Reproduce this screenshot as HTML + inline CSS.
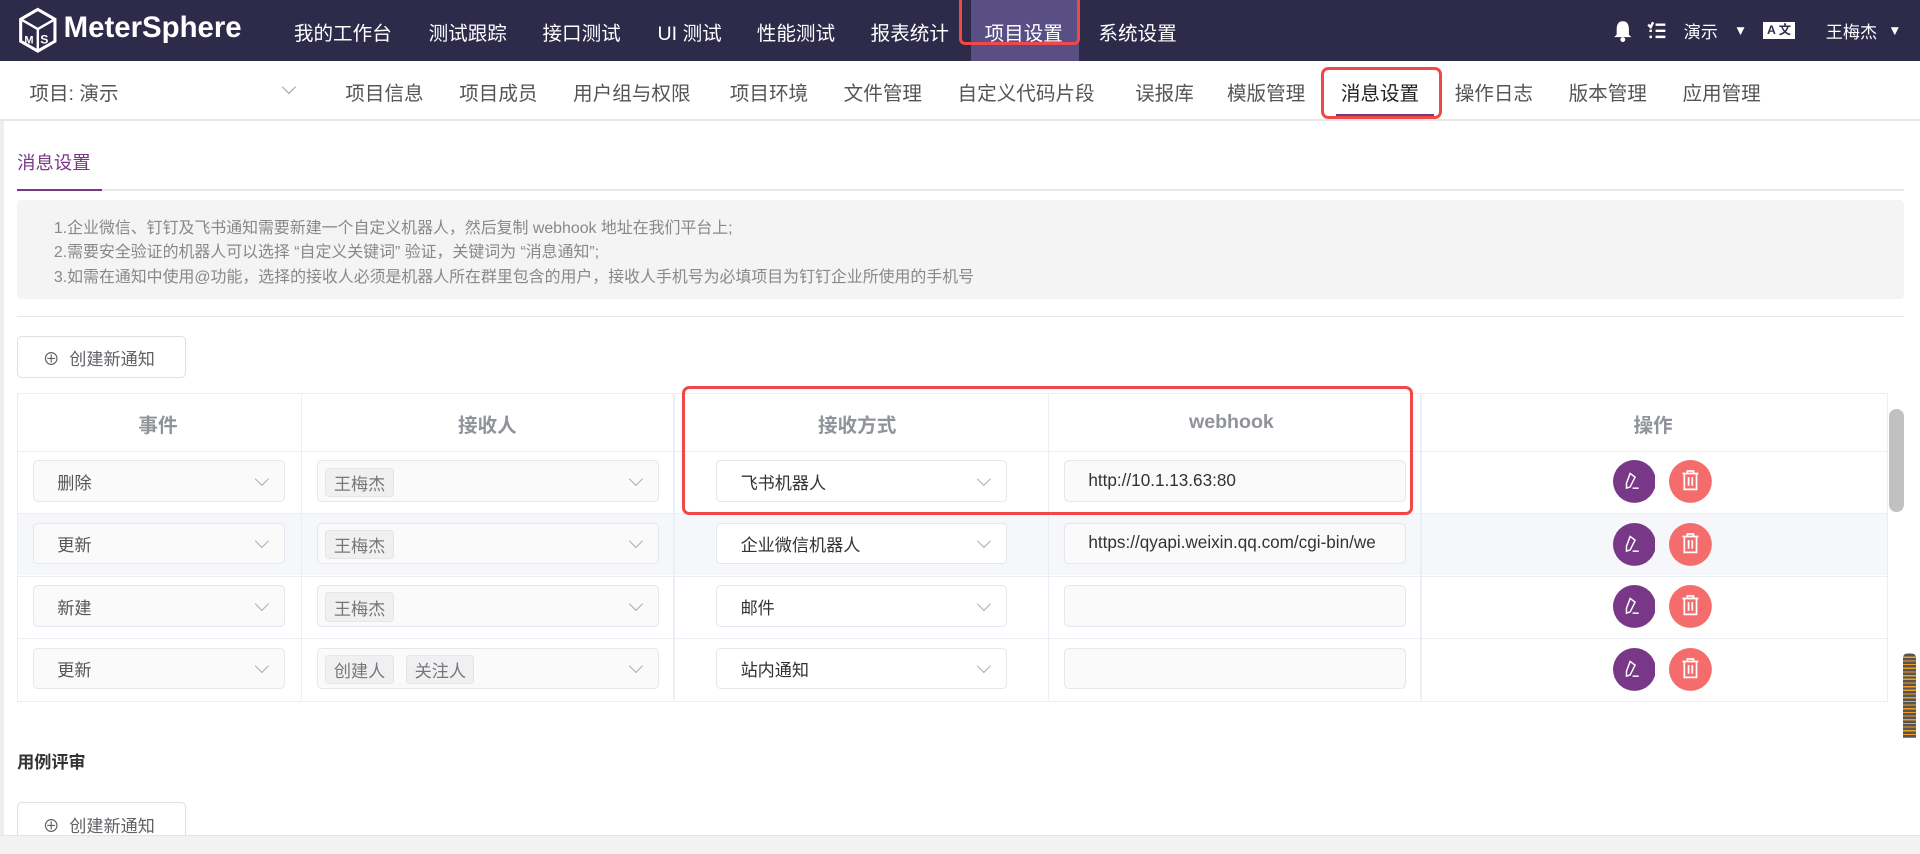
<!DOCTYPE html>
<html><head><meta charset="utf-8"><style>
*{box-sizing:border-box;margin:0;padding:0}
html,body{width:1920px;height:854px;overflow:hidden;background:#fff}
#r{zoom:1.22449;width:1568px;height:698px;position:relative;font-family:"Liberation Sans","Noto Sans CJK SC",sans-serif;color:#606266;overflow:hidden}
.a{position:absolute;white-space:nowrap}
.top{left:0;top:0;width:1568px;height:50px;background:#2d2a4a}
.sub .t{font-size:16px;top:63px;color:#555}
.sel{position:absolute;height:34px;border:1px solid #e4e7ed;border-radius:4px;background:#fafafa;font-size:14px;color:#555}
.sel span{position:absolute;left:19px;top:6px}
.chev{position:absolute;right:14px;top:10px;width:8px;height:8px;border-right:1px solid #aaa;border-bottom:1px solid #aaa;transform:rotate(45deg)}
.tag{position:absolute;top:5px;height:24px;background:#f0f0f2;border:1px solid #e5e5e5;border-radius:3px;font-size:14px;color:#777;padding:1px 6px}
</style></head><body><div id="r">
<div class="a top"></div>
<svg class="a" style="left:14px;top:6px" width="34" height="38" viewBox="0 0 34 38"><path d="M17 2 L31 10 L31 28 L17 36 L3 28 L3 10Z" fill="none" stroke="#fff" stroke-width="2.5"/><path d="M3 10 L17 18 L31 10 M17 18 L17 36" stroke="#fff" stroke-width="2" fill="none"/><text x="6" y="30" font-size="9" fill="#fff" font-weight="bold" font-family="Liberation Sans">M</text><text x="19" y="30" font-size="10" fill="#fff" font-weight="bold" font-family="Liberation Sans">S</text></svg>
<div class="a" style="left:52px;top:9px;color:#fff;font-size:24px;font-weight:bold">MeterSphere</div>
<div class="a" style="left:793px;top:0;width:88px;height:50px;background:#5a4f85"></div>
<div class="a" style="left:240px;color:#fff;font-size:16px;top:14px">我的工作台</div>
<div class="a" style="left:350px;color:#fff;font-size:16px;top:14px">测试跟踪</div>
<div class="a" style="left:443px;color:#fff;font-size:16px;top:14px">接口测试</div>
<div class="a" style="left:537px;color:#fff;font-size:16px;top:14px">UI 测试</div>
<div class="a" style="left:618px;color:#fff;font-size:16px;top:14px">性能测试</div>
<div class="a" style="left:711px;color:#fff;font-size:16px;top:14px">报表统计</div>
<div class="a" style="left:804px;color:#fff;font-size:16px;top:14px">项目设置</div>
<div class="a" style="left:897px;color:#fff;font-size:16px;top:14px">系统设置</div>
<div class="a" style="left:783px;top:-4px;width:99px;height:41px;border:3px solid #f04848;border-radius:5px"></div>
<svg class="a" style="left:1317px;top:16px" width="16" height="18" viewBox="0 0 16 18"><path d="M8 1 C4 1 3 4 3 8 L3 12 L1 14 L15 14 L13 12 L13 8 C13 4 12 1 8 1Z" fill="#fff"/><circle cx="8" cy="16" r="2" fill="#fff"/></svg>
<svg class="a" style="left:1345px;top:17px" width="16" height="16" viewBox="0 0 16 16"><path d="M1 3 L3 5 L5 1 M7 3 H15 M7 8 H15 M7 13 H15 M2 8 H4 M2 13 H4" stroke="#fff" stroke-width="2" fill="none"/></svg>
<div class="a" style="left:1375px;top:15px;color:#fff;font-size:14px">演示</div>
<div class="a" style="left:1416px;top:19px;color:#fff;font-size:11px">▼</div>
<div class="a" style="left:1440px;top:18px;width:26px;height:14px;background:#fff;color:#2d2a4a;font-size:10px;font-weight:bold;padding-left:3px;line-height:14px">A 文</div>
<div class="a" style="left:1491px;top:15px;color:#fff;font-size:14px">王梅杰</div>
<div class="a" style="left:1542px;top:19px;color:#fff;font-size:11px">▼</div>

<div class="a" style="left:0;top:97px;width:1568px;height:2px;background:#e6e6e6"></div>
<div class="a" style="left:24px;top:63px;font-size:16px;color:#555">项目: 演示</div>
<div class="a" style="left:232px;top:67px;width:8px;height:8px;border-right:1px solid #999;border-bottom:1px solid #999;transform:rotate(45deg)"></div>
<div class="sub">
<div class="a t" style="left:282px">项目信息</div><div class="a t" style="left:375px">项目成员</div><div class="a t" style="left:468px">用户组与权限</div><div class="a t" style="left:596px">项目环境</div><div class="a t" style="left:689px">文件管理</div><div class="a t" style="left:782px">自定义代码片段</div><div class="a t" style="left:927px">误报库</div><div class="a t" style="left:1002px">模版管理</div><div class="a t" style="left:1095px;color:#222">消息设置</div><div class="a t" style="left:1188px">操作日志</div><div class="a t" style="left:1281px">版本管理</div><div class="a t" style="left:1374px">应用管理</div>
</div>
<div class="a" style="left:1091px;top:93px;width:80px;height:4px;background:#783887"></div>
<div class="a" style="left:1079px;top:55px;width:99px;height:42px;border:3px solid #f04848;border-radius:6px"></div>

<div class="a" style="left:0;top:99px;width:3px;height:600px;background:#eee"></div>
<div class="a" style="left:14px;top:122px;font-size:15px;color:#783887">消息设置</div>
<div class="a" style="left:14px;top:154px;width:1541px;height:2px;background:#e4e7ed"></div>
<div class="a" style="left:14px;top:154px;width:69px;height:2px;background:#783887"></div>
<div class="a" style="left:14px;top:163px;width:1541px;height:81px;background:#f4f4f5;border-radius:3px"></div>
<div class="a" style="left:44px;top:177px;font-size:13px;color:#888;line-height:20px">1.企业微信、钉钉及飞书通知需要新建一个自定义机器人，然后复制 webhook 地址在我们平台上;<br>2.需要安全验证的机器人可以选择 “自定义关键词” 验证，关键词为 “消息通知”;<br>3.如需在通知中使用@功能，选择的接收人必须是机器人所在群里包含的用户，接收人手机号为必填项目为钉钉企业所使用的手机号</div>
<div class="a" style="left:14px;top:258px;width:1541px;height:1px;background:#e4e7ed"></div>
<div class="a" style="left:14px;top:274px;width:138px;height:35px;border:1px solid #dcdfe6;border-radius:4px;font-size:14px;color:#606266;padding:7px 0 0 20px">⊕&nbsp;&nbsp;创建新通知</div>

<div class="a" style="left:14px;top:321px;width:1528px;height:252px;border:1px solid #ebeef5"></div>
<div class="a" style="left:15px;top:419px;width:1526px;height:51px;background:#f5f7fa"></div>
<div class="a" style="left:15px;top:368px;width:1526px;height:1px;background:#ebeef5"></div>
<div class="a" style="left:15px;top:419px;width:1526px;height:1px;background:#ebeef5"></div>
<div class="a" style="left:15px;top:470px;width:1526px;height:1px;background:#ebeef5"></div>
<div class="a" style="left:15px;top:521px;width:1526px;height:1px;background:#ebeef5"></div>
<div class="a" style="left:246px;top:322px;width:1px;height:250px;background:#ebeef5"></div>
<div class="a" style="left:550px;top:322px;width:1px;height:250px;background:#ebeef5"></div>
<div class="a" style="left:856px;top:322px;width:1px;height:250px;background:#ebeef5"></div>
<div class="a" style="left:1160px;top:322px;width:1px;height:250px;background:#ebeef5"></div>
<div class="a" style="left:113px;top:334px;font-size:16px;font-weight:bold;color:#909399">事件</div>
<div class="a" style="left:374px;top:334px;font-size:16px;font-weight:bold;color:#909399">接收人</div>
<div class="a" style="left:668px;top:334px;font-size:16px;font-weight:bold;color:#909399">接收方式</div>
<div class="a" style="left:971px;top:336px;font-size:16px;font-weight:bold;color:#909399">webhook</div>
<div class="a" style="left:1334px;top:334px;font-size:16px;font-weight:bold;color:#909399">操作</div>

<div class="sel" style="left:27px;top:376px;width:206px"><span>删除</span><i class="chev"></i></div>
<div class="sel" style="left:27px;top:427px;width:206px"><span>更新</span><i class="chev"></i></div>
<div class="sel" style="left:27px;top:478px;width:206px"><span>新建</span><i class="chev"></i></div>
<div class="sel" style="left:27px;top:529px;width:206px"><span>更新</span><i class="chev"></i></div>
<div class="sel" style="left:259px;top:376px;width:279px"><div class="tag" style="left:6px">王梅杰</div><i class="chev"></i></div>
<div class="sel" style="left:259px;top:427px;width:279px"><div class="tag" style="left:6px">王梅杰</div><i class="chev"></i></div>
<div class="sel" style="left:259px;top:478px;width:279px"><div class="tag" style="left:6px">王梅杰</div><i class="chev"></i></div>
<div class="sel" style="left:259px;top:529px;width:279px"><div class="tag" style="left:6px">创建人</div><div class="tag" style="left:72px">关注人</div><i class="chev"></i></div>
<div class="sel" style="left:585px;top:376px;width:237px;background:#fff"><span style="color:#333">飞书机器人</span><i class="chev"></i></div>
<div class="sel" style="left:585px;top:427px;width:237px;background:#fff"><span style="color:#333">企业微信机器人</span><i class="chev"></i></div>
<div class="sel" style="left:585px;top:478px;width:237px;background:#fff"><span style="color:#333">邮件</span><i class="chev"></i></div>
<div class="sel" style="left:585px;top:529px;width:237px;background:#fff"><span style="color:#333">站内通知</span><i class="chev"></i></div>
<div class="sel" style="left:869px;top:376px;width:279px;overflow:hidden"><span style="color:#333;top:7px">http://10.1.13.63:80</span></div>
<div class="sel" style="left:869px;top:427px;width:279px;overflow:hidden"><span style="color:#333;top:7px">https://qyapi.weixin.qq.com/cgi-bin/we</span></div>
<div class="sel" style="left:869px;top:478px;width:279px"></div>
<div class="sel" style="left:869px;top:529px;width:279px"></div>
<div class="a" style="left:557px;top:315px;width:597px;height:106px;border:3px solid #f04848;border-radius:6px"></div>

<svg width="0" height="0" style="position:absolute"><defs>
<g id="pe"><path d="M10 9 L14 12 L10 20 L7 21 L7 17Z" fill="none" stroke="#fff" stroke-width="1.2"/><path d="M12 21 H17" stroke="#fff" stroke-width="1.2"/></g>
<g id="tr"><path d="M11 11 H24 M15 11 V9 H20 V11 M12.5 11 V24 H22.5 V11 M16 14 V21 M19 14 V21" fill="none" stroke="#fff" stroke-width="1.4"/></g>
</defs></svg>
<svg class="a" style="left:1317px;top:376px" width="35" height="35"><circle cx="17.5" cy="17.5" r="17.5" fill="#783887"/><use href="#pe" transform="translate(4,2)"/></svg>
<svg class="a" style="left:1363px;top:376px" width="35" height="35"><circle cx="17.5" cy="17.5" r="17.5" fill="#f56c6c"/><use href="#tr"/></svg>
<svg class="a" style="left:1317px;top:427px" width="35" height="35"><circle cx="17.5" cy="17.5" r="17.5" fill="#783887"/><use href="#pe" transform="translate(4,2)"/></svg>
<svg class="a" style="left:1363px;top:427px" width="35" height="35"><circle cx="17.5" cy="17.5" r="17.5" fill="#f56c6c"/><use href="#tr"/></svg>
<svg class="a" style="left:1317px;top:478px" width="35" height="35"><circle cx="17.5" cy="17.5" r="17.5" fill="#783887"/><use href="#pe" transform="translate(4,2)"/></svg>
<svg class="a" style="left:1363px;top:478px" width="35" height="35"><circle cx="17.5" cy="17.5" r="17.5" fill="#f56c6c"/><use href="#tr"/></svg>
<svg class="a" style="left:1317px;top:529px" width="35" height="35"><circle cx="17.5" cy="17.5" r="17.5" fill="#783887"/><use href="#pe" transform="translate(4,2)"/></svg>
<svg class="a" style="left:1363px;top:529px" width="35" height="35"><circle cx="17.5" cy="17.5" r="17.5" fill="#f56c6c"/><use href="#tr"/></svg>

<div class="a" style="left:1543px;top:334px;width:12px;height:84px;background:#c1c1c1;border-radius:6px"></div>
<div class="a" style="left:1554px;top:533px;width:11px;height:70px;background:repeating-linear-gradient(#f0a020 0 1px,#555 1px 3px);border-radius:4px 4px 0 0"></div>
<div class="a" style="left:14px;top:611px;font-size:14px;font-weight:bold;color:#333">用例评审</div>
<div class="a" style="left:14px;top:655px;width:138px;height:35px;border:1px solid #dcdfe6;border-radius:4px;font-size:14px;color:#606266;padding:7px 0 0 20px">⊕&nbsp;&nbsp;创建新通知</div>
<div class="a" style="left:0;top:682px;width:1568px;height:16px;background:#f2f2f2;border-top:1px solid #e4e4e4"></div>
</div></body></html>
